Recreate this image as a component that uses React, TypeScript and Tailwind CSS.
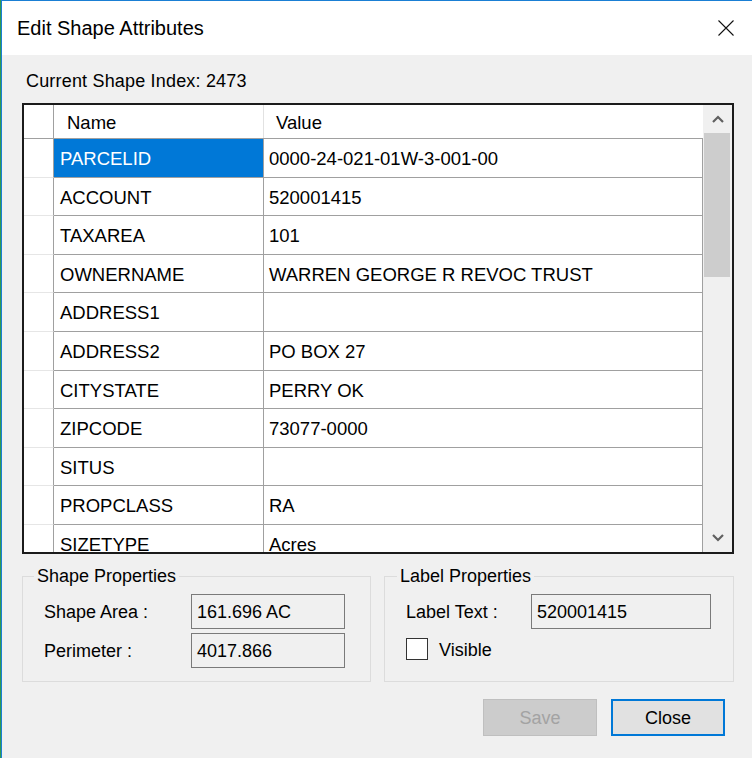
import React from "react";

const rows = [
  { n: "PARCELID", v: "0000-24-021-01W-3-001-00", h: "h-[39px]", sel: true },
  { n: "ACCOUNT", v: "520001415", h: "h-[38px]" },
  { n: "TAXAREA", v: "101", h: "h-[39px]" },
  { n: "OWNERNAME", v: "WARREN GEORGE R REVOC TRUST", h: "h-[38px]" },
  { n: "ADDRESS1", v: "", h: "h-[39px]" },
  { n: "ADDRESS2", v: "PO BOX 27", h: "h-[39px]" },
  { n: "CITYSTATE", v: "PERRY OK", h: "h-[38px]" },
  { n: "ZIPCODE", v: "73077-0000", h: "h-[39px]" },
  { n: "SITUS", v: "", h: "h-[38px]" },
  { n: "PROPCLASS", v: "RA", h: "h-[39px]" },
  { n: "SIZETYPE", v: "Acres", h: "h-[39px]" },
];

const font = { fontFamily: '"Liberation Sans", Arial, sans-serif' };

export default function App() {
  return (
    <div className="w-[752px] h-[758px] flex bg-[#f0f0f0] overflow-hidden text-black" style={font}>
      <div className="w-[1px] h-full bg-[#2f9a52]" />
      <div className="flex-1 flex flex-col border-l border-t border-[#1a7fd4]">
        {/* Title bar */}
        <div className="h-[54px] bg-white flex items-center justify-between pl-[15px] pr-[18px]">
          <span className="text-[20px] leading-[24px] text-black">Edit Shape Attributes</span>
          <svg width="16" height="16" viewBox="0 0 16 16">
            <path d="M0.5 0.5 L15.5 15.5 M15.5 0.5 L0.5 15.5" stroke="#111" strokeWidth="1.1" fill="none" />
          </svg>
        </div>

        {/* Content */}
        <div className="flex-1 flex flex-col pl-[20px] pr-[18px]">
          <div className="mt-[16px] pl-[4px] text-[18px] leading-[20px] tracking-[0.01em]">Current Shape Index: 2473</div>

          {/* Grid */}
          <div className="mt-[12px] w-[712px] h-[451px] border-2 border-[#1b1b1b] bg-white flex overflow-hidden">
            <div className="w-[679px] flex flex-col overflow-hidden text-[18.5px]">
              {/* header */}
              <div className="h-[34px] shrink-0 flex border-b border-[#a0a0a0]">
                <div className="w-[30px] border-r border-[#a0a0a0]" />
                <div className="w-[210px] border-r border-[#e2e2e2] flex items-center pl-[13px] pt-[3px]">Name</div>
                <div className="w-[439px] flex items-center pl-[12px] pt-[3px]">Value</div>
              </div>
              {rows.map((r) => (
                <div key={r.n} className={`${r.h} shrink-0 flex`}>
                  <div className="w-[30px] border-r border-[#a0a0a0] border-b border-b-[#e6e6e6]" />
                  <div
                    className={`w-[210px] border-r border-b border-[#a0a0a0] flex items-center pl-[6px] pt-[2px] ${
                      r.sel ? "bg-[#0078d7] text-white" : ""
                    }`}
                  >
                    {r.n}
                  </div>
                  <div className="w-[439px] border-r border-b border-[#a0a0a0] flex items-center pl-[5px] pt-[2px]">{r.v}</div>
                </div>
              ))}
            </div>
            {/* scrollbar */}
            <div className="w-[29px] bg-[#f0f0f0] flex flex-col">
              <div className="h-[28px] flex items-center justify-center">
                <svg width="12" height="8" viewBox="0 0 12 8">
                  <polyline points="1,7 6,2 11,7" stroke="#606060" strokeWidth="2.2" fill="none" />
                </svg>
              </div>
              <div className="h-[144px] ml-[1px] mr-[2px] bg-[#cdcdcd]" />
              <div className="flex-1" />
              <div className="h-[28px] flex items-center justify-center">
                <svg width="12" height="8" viewBox="0 0 12 8">
                  <polyline points="1,1 6,6 11,1" stroke="#606060" strokeWidth="2.2" fill="none" />
                </svg>
              </div>
            </div>
          </div>

          {/* Group boxes */}
          <div className="mt-[12px] flex gap-[13px] text-[18px]">
            <fieldset className="w-[349px] border border-[#dcdcdc] pb-[13px]">
              <legend className="ml-[11px] px-[3px] leading-[20px]">Shape Properties</legend>
              <div className="pl-[21px]">
                <div className="mt-[8px] flex items-center h-[35px]">
                  <span className="w-[147px] pt-[2px]">Shape Area :</span>
                  <div className="w-[154px] h-[35px] border border-[#7a7a7a] bg-[#f0f0f0] flex items-center pl-[5px] pt-[2px]">161.696 AC</div>
                </div>
                <div className="mt-[4px] flex items-center h-[35px]">
                  <span className="w-[147px] pt-[2px]">Perimeter :</span>
                  <div className="w-[154px] h-[35px] border border-[#7a7a7a] bg-[#f0f0f0] flex items-center pl-[5px] pt-[2px]">4017.866</div>
                </div>
              </div>
            </fieldset>
            <fieldset className="w-[350px] border border-[#dcdcdc] pb-[20px]">
              <legend className="ml-[12px] px-[3px] leading-[20px]">Label Properties</legend>
              <div className="pl-[21px]">
                <div className="mt-[8px] flex items-center h-[35px]">
                  <span className="w-[125px] pt-[2px]">Label Text :</span>
                  <div className="w-[180px] h-[35px] border border-[#7a7a7a] bg-[#f0f0f0] flex items-center pl-[5px] pt-[2px]">520001415</div>
                </div>
                <div className="mt-[9px] flex items-center h-[22px]">
                  <div className="w-[22px] h-[22px] border border-[#333] bg-white" />
                  <span className="ml-[11px] pt-[2px]">Visible</span>
                </div>
              </div>
            </fieldset>
          </div>

          {/* Buttons */}
          <div className="mt-[17px] flex justify-end gap-[14px] pr-[9px] text-[18px]">
            <div className="w-[114px] h-[37px] bg-[#cccccc] border border-[#bfbfbf] text-[#a3a3a3] flex items-center justify-center pt-[2px]">Save</div>
            <div className="w-[114px] h-[37px] bg-[#e1e1e1] border-2 border-[#0078d7] flex items-center justify-center pt-[2px]">Close</div>
          </div>
        </div>
      </div>
    </div>
  );
}
